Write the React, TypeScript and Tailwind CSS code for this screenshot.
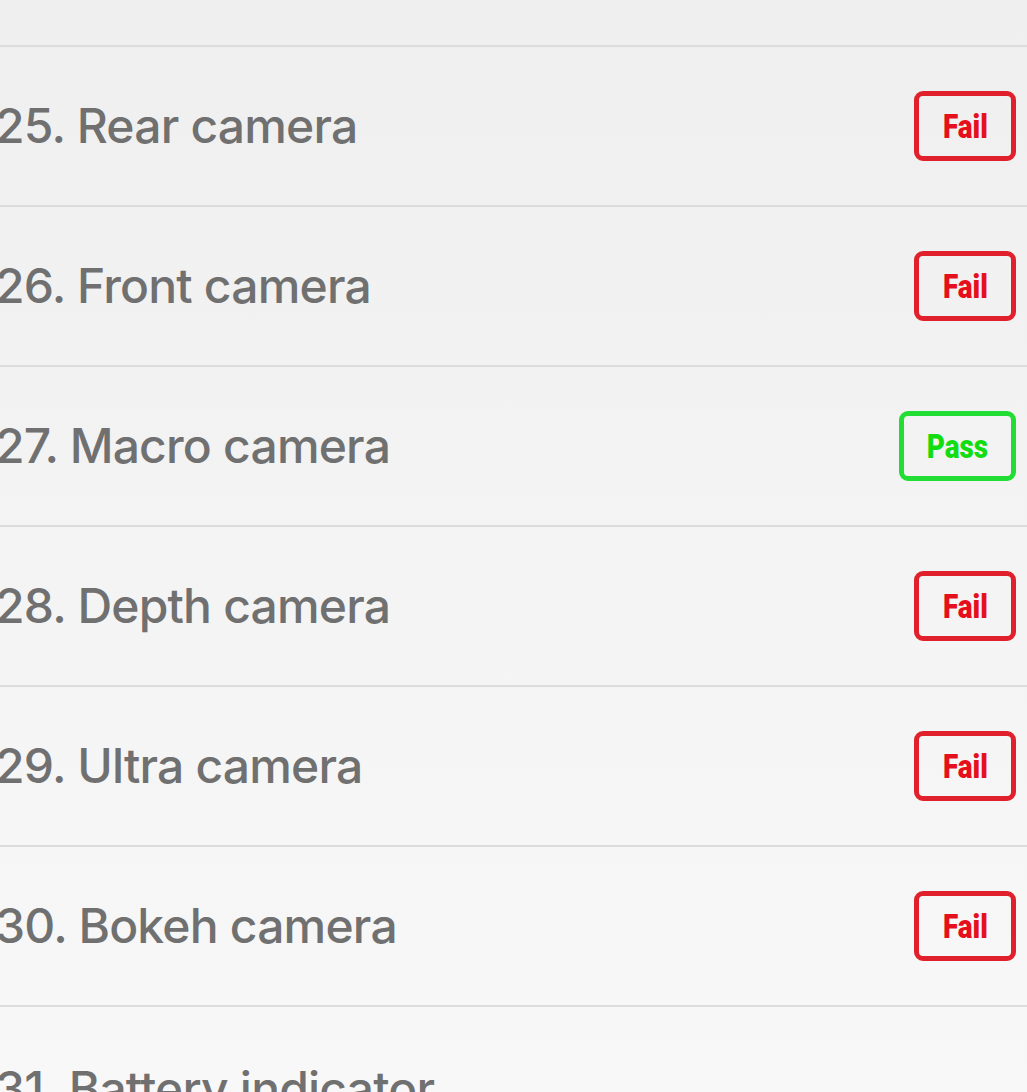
import React from "react";

const rows: { label: string; pass: boolean }[] = [
  { label: "25. Rear camera", pass: false },
  { label: "26. Front camera", pass: false },
  { label: "27. Macro camera", pass: true },
  { label: "28. Depth camera", pass: false },
  { label: "29. Ultra camera", pass: false },
  { label: "30. Bokeh camera", pass: false },
];

function Badge({ pass }: { pass: boolean }) {
  return pass ? (
    <div className="h-[70px] w-[117px] rounded-[9px] border-[5px] border-[#22dd33] flex items-center justify-center">
      <span
        className="inline-block scale-x-[0.82] text-[34px] font-black text-[#11dd11] leading-none"
        style={{ fontFamily: '"Roboto", sans-serif' }}
      >
        Pass
      </span>
    </div>
  ) : (
    <div className="h-[70px] w-[102px] rounded-[9px] border-[5px] border-[#e0202c] flex items-center justify-center">
      <span
        className="inline-block scale-x-[0.82] text-[34px] font-black text-[#e6101c] leading-none"
        style={{ fontFamily: '"Roboto", sans-serif' }}
      >
        Fail
      </span>
    </div>
  );
}

export default function App() {
  return (
    <div
      className="w-[1027px] h-[1092px] overflow-hidden bg-gradient-to-b from-[#efefef] to-[#f8f8f8]"
      style={{ fontFamily: '"Inter", "Noto Sans", sans-serif' }}
    >
      <div className="h-[45px]" />
      {rows.map((r) => (
        <div
          key={r.label}
          className="h-[160px] border-t-2 border-[#dcdcdc] flex items-center justify-between pr-[11px]"
        >
          <span className="ml-[-5px] text-[48px] font-medium tracking-[-0.8px] text-[#707070] leading-none">
            {r.label}
          </span>
          <Badge pass={r.pass} />
        </div>
      ))}
      <div className="h-[160px] border-t-2 border-[#dcdcdc] flex items-center">
        <span className="ml-[-5px] mt-[5px] text-[48px] font-medium tracking-[-0.8px] text-[#707070] leading-none">
          31. Battery indicator
        </span>
      </div>
    </div>
  );
}
